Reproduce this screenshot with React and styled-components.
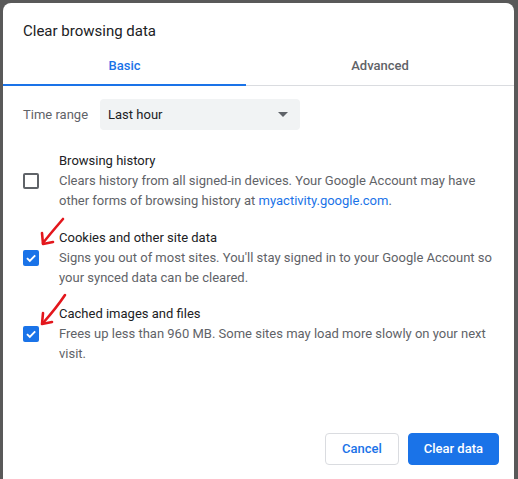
import React from "react";
import styled, { createGlobalStyle } from "styled-components";

const GlobalStyle = createGlobalStyle`
  html, body {
    margin: 0;
    padding: 0;
    height: 100%;
    overflow: hidden;
    background: #595959;
  }
  body {
    font-family: Roboto, "Liberation Sans", Arial, sans-serif;
  }
`;

const Backdrop = styled.div`
  padding: 3px 4px 0 3px;
  height: 479px;
  box-sizing: border-box;
`;

const Dialog = styled.div`
  position: relative;
  background: #fff;
  border-radius: 8px 8px 0 0;
  height: 520px;
  color: #202124;
`;

const Title = styled.h1`
  margin: 0;
  padding: 19px 20px 0;
  height: 43px;
  box-sizing: border-box;
  font-size: 15px;
  font-weight: 400;
  color: #202124;
`;

const Tabs = styled.div`
  display: flex;
  border-bottom: 1px solid #dadce0;
`;

const Tab = styled.div`
  flex: ${(p) => (p.$grow ? 1 : "0 0 243px")};
  height: 40px;
  box-sizing: border-box;
  display: flex;
  align-items: center;
  justify-content: center;
  font-size: 13px;
  font-weight: 500;
  color: ${(p) => (p.$active ? "#1a73e8" : "#5f6368")};
  border-bottom: 2px solid ${(p) => (p.$active ? "#1a73e8" : "transparent")};
  margin-bottom: -1px;
  padding-top: 1px;
`;

const Body = styled.div`
  padding: 13px 20px 0;
`;

const RangeRow = styled.div`
  display: flex;
  align-items: center;
  gap: 12px;
  height: 31px;
  margin-bottom: 21px;
`;

const Label = styled.span`
  font-size: 13px;
  color: #5f6368;
`;

const Select = styled.div`
  width: 200px;
  height: 31px;
  box-sizing: border-box;
  background: #f1f3f4;
  border-radius: 4px;
  display: flex;
  align-items: center;
  justify-content: space-between;
  padding: 0 12px 0 8px;
  font-size: 13px;
  color: #202124;
`;

const Caret = styled.span`
  width: 0;
  height: 0;
  border-left: 5px solid transparent;
  border-right: 5px solid transparent;
  border-top: 5px solid #5f6368;
`;

const Item = styled.div`
  display: flex;
  align-items: center;
  margin-bottom: 16.5px;
`;

const Box = styled.span`
  flex: 0 0 16px;
  width: 16px;
  height: 16px;
  box-sizing: border-box;
  border-radius: 2px;
  margin-right: 20px;
  display: flex;
  align-items: center;
  justify-content: center;
  background: ${(p) => (p.$checked ? "#1a73e8" : "#fff")};
  border: ${(p) => (p.$checked ? "none" : "2px solid #5f6368")};
`;

const Texts = styled.div`
  font-size: 13px;
  line-height: 20px;
`;

const ItemTitle = styled.div`
  color: #202124;
`;

const Desc = styled.div`
  color: #5f6368;
`;

const A = styled.a`
  color: #1a73e8;
  text-decoration: none;
`;

const Footer = styled.div`
  display: flex;
  justify-content: flex-end;
  gap: 9px;
  padding: 52px 15px 0 0;
`;

const Button = styled.button`
  height: 32px;
  box-sizing: border-box;
  border-radius: 4px;
  font-family: inherit;
  font-size: 13px;
  font-weight: 500;
  padding: 0 ${(p) => (p.$primary ? 15 : 16)}px;
  border: 1px solid ${(p) => (p.$primary ? "#1a73e8" : "#dadce0")};
  background: ${(p) => (p.$primary ? "#1a73e8" : "#fff")};
  color: ${(p) => (p.$primary ? "#fff" : "#1a73e8")};
`;

const ArrowMark = styled.svg`
  position: absolute;
  left: ${(p) => p.$x}px;
  top: ${(p) => p.$y}px;
  overflow: visible;
`;

const Check = () => (
  <svg width="12" height="12" viewBox="0 0 12 12">
    <path d="M2 6.2 L4.8 9 L10.2 3.4" fill="none" stroke="#fff" strokeWidth="1.9" />
  </svg>
);

const RedArrow = ({ x, y, shaft, head }) => (
  <ArrowMark $x={x} $y={y} width="30" height="36">
    <path d={shaft} fill="none" stroke="#e3161c" strokeWidth="2.6" strokeLinecap="round" />
    <path d={head} fill="none" stroke="#e3161c" strokeWidth="2.6" strokeLinecap="round" strokeLinejoin="round" />
  </ArrowMark>
);

const items = [
  {
    title: "Browsing history",
    checked: false,
    desc: (
      <>
        Clears history from all signed-in devices. Your Google Account may have
        other forms of browsing history at <A href="#">myactivity.google.com</A>.
      </>
    ),
  },
  {
    title: "Cookies and other site data",
    checked: true,
    desc: "Signs you out of most sites. You'll stay signed in to your Google Account so your synced data can be cleared.",
  },
  {
    title: "Cached images and files",
    checked: true,
    desc: "Frees up less than 960 MB. Some sites may load more slowly on your next visit.",
  },
];

export default function App() {
  return (
    <Backdrop>
      <GlobalStyle />
      <Dialog>
        <Title>Clear browsing data</Title>
        <Tabs>
          <Tab $active>Basic</Tab>
          <Tab $grow>Advanced</Tab>
        </Tabs>
        <Body>
          <RangeRow>
            <Label>Time range</Label>
            <Select>
              Last hour
              <Caret />
            </Select>
          </RangeRow>
          {items.map((it) => (
            <Item key={it.title}>
              <Box $checked={it.checked}>{it.checked && <Check />}</Box>
              <Texts>
                <ItemTitle>{it.title}</ItemTitle>
                <Desc>{it.desc}</Desc>
              </Texts>
            </Item>
          ))}
        </Body>
        <Footer>
          <Button>Cancel</Button>
          <Button $primary>Clear data</Button>
        </Footer>
        <RedArrow
          x={36}
          y={212}
          shaft="M24 4 C 18 11, 11 19, 4 28"
          head="M3 18 L4 29 L14 27"
        />
        <RedArrow
          x={36}
          y={289}
          shaft="M26 3 C 20 12, 12 22, 4 31"
          head="M4 21 L3 32 L13 30"
        />
      </Dialog>
    </Backdrop>
  );
}
